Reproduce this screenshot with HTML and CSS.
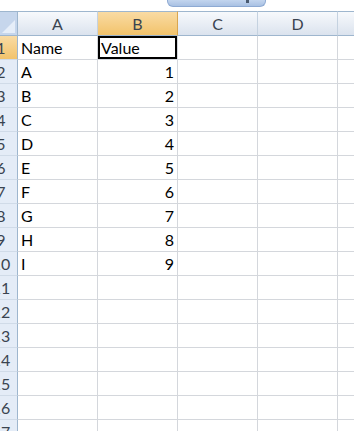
FILE: index.html
```html
<!DOCTYPE html>
<html lang="en">
<head>
  <meta charset="UTF-8">
  <meta name="viewport" content="width=device-width, initial-scale=1.0">
  <title>Sheet1</title>
  <link rel="stylesheet" href="styles.css">
</head>
<body>
  <div class="window">
    <div class="topbar">
      <div class="split-tab"><span class="grip"></span></div>
    </div>

    <table class="sheet">
      <colgroup>
        <col class="c-head">
        <col class="c-cell"><col class="c-cell"><col class="c-cell"><col class="c-cell"><col class="c-cell">
      </colgroup>
      <thead>
        <tr>
          <th class="corner"><span class="corner-tri"></span></th>
          <th class="col-head">A</th>
          <th class="col-head active">B</th>
          <th class="col-head">C</th>
          <th class="col-head">D</th>
          <th class="col-head"></th>
        </tr>
      </thead>
      <tbody>
        <tr>
          <th class="row-head active">1</th>
          <td>Name</td>
          <td class="selected">Value</td>
          <td></td><td></td><td></td>
        </tr>
        <tr><th class="row-head">2</th><td>A</td><td class="num">1</td><td></td><td></td><td></td></tr>
        <tr><th class="row-head">3</th><td>B</td><td class="num">2</td><td></td><td></td><td></td></tr>
        <tr><th class="row-head">4</th><td>C</td><td class="num">3</td><td></td><td></td><td></td></tr>
        <tr><th class="row-head">5</th><td>D</td><td class="num">4</td><td></td><td></td><td></td></tr>
        <tr><th class="row-head">6</th><td>E</td><td class="num">5</td><td></td><td></td><td></td></tr>
        <tr><th class="row-head">7</th><td>F</td><td class="num">6</td><td></td><td></td><td></td></tr>
        <tr><th class="row-head">8</th><td>G</td><td class="num">7</td><td></td><td></td><td></td></tr>
        <tr><th class="row-head">9</th><td>H</td><td class="num">8</td><td></td><td></td><td></td></tr>
        <tr><th class="row-head">10</th><td>I</td><td class="num">9</td><td></td><td></td><td></td></tr>
        <tr><th class="row-head">11</th><td></td><td></td><td></td><td></td><td></td></tr>
        <tr><th class="row-head">12</th><td></td><td></td><td></td><td></td><td></td></tr>
        <tr><th class="row-head">13</th><td></td><td></td><td></td><td></td><td></td></tr>
        <tr><th class="row-head">14</th><td></td><td></td><td></td><td></td><td></td></tr>
        <tr><th class="row-head">15</th><td></td><td></td><td></td><td></td><td></td></tr>
        <tr><th class="row-head">16</th><td></td><td></td><td></td><td></td><td></td></tr>
        <tr><th class="row-head">17</th><td></td><td></td><td></td><td></td><td></td></tr>
      </tbody>
    </table>
  </div>
</body>
</html>
```

FILE: styles.css
```css
* {
  margin: 0;
  padding: 0;
  box-sizing: border-box;
}

body {
  font-family: Lato, "Open Sans", sans-serif;
  font-size: 16px;
  background: #fff;
  color: #000;
  overflow: hidden;
}

.window {
  width: 354px;
  height: 431px;
  overflow: hidden;
}

/* strip above the column headers */
.topbar {
  height: 11px;
  background: #fff;
}

.split-tab {
  width: 99px;
  height: 7px;
  margin-left: 167px;
  background: linear-gradient(#c3d5ee, #a9c1e3);
  border: 1px solid #8eaad3;
  border-top: none;
  border-radius: 0 0 6px 6px;
  display: flex;
  justify-content: flex-end;
  padding-right: 16px;
}

.grip {
  width: 3px;
  height: 3px;
  background: #4a5a70;
}

/* grid */
.sheet {
  border-collapse: separate;
  border-spacing: 0;
  margin-left: -15px;
  table-layout: fixed;
  width: 433px;
}

.c-head {
  width: 33px;
}

.c-cell {
  width: 80px;
}

.sheet th,
.sheet td {
  height: 24px;
  line-height: 23px;
  padding: 0 3px;
  white-space: nowrap;
  overflow: hidden;
  vertical-align: bottom;
}

.sheet td {
  border-right: 1px solid #d4d7dc;
  border-bottom: 1px solid #d4d7dc;
}

.sheet td.num {
  text-align: right;
}

.sheet td.selected {
  box-shadow: inset 0 0 0 2px #000;
}

.sheet th {
  font-weight: normal;
  color: #3a4450;
  text-align: center;
}

.sheet thead th {
  height: 25px;
  border-top: 1px solid #9eb6ce;
  border-bottom: 1px solid #9eb6ce;
}

.corner {
  background: #c6d6ec;
  border-right: 1px solid #9eb6ce;
  position: relative;
}

.corner-tri {
  position: absolute;
  right: 2px;
  bottom: 2px;
  width: 0;
  height: 0;
  border-left: 13px solid transparent;
  border-bottom: 13px solid #e6eef9;
}

.col-head {
  background: linear-gradient(#f7f9fc, #dbe3ee);
  border-right: 1px solid #c5d2e0;
}

.col-head.active {
  background: linear-gradient(#f9dba4, #f2c36b);
  border-right-color: #d9a650;
}

.row-head {
  background: #e4ecf7;
  border-right: 1px solid #9eb6ce;
  border-bottom: 1px solid #d0dbe8;
}

.row-head.active {
  background: linear-gradient(#f9dba4, #f2c36b);
}
```
